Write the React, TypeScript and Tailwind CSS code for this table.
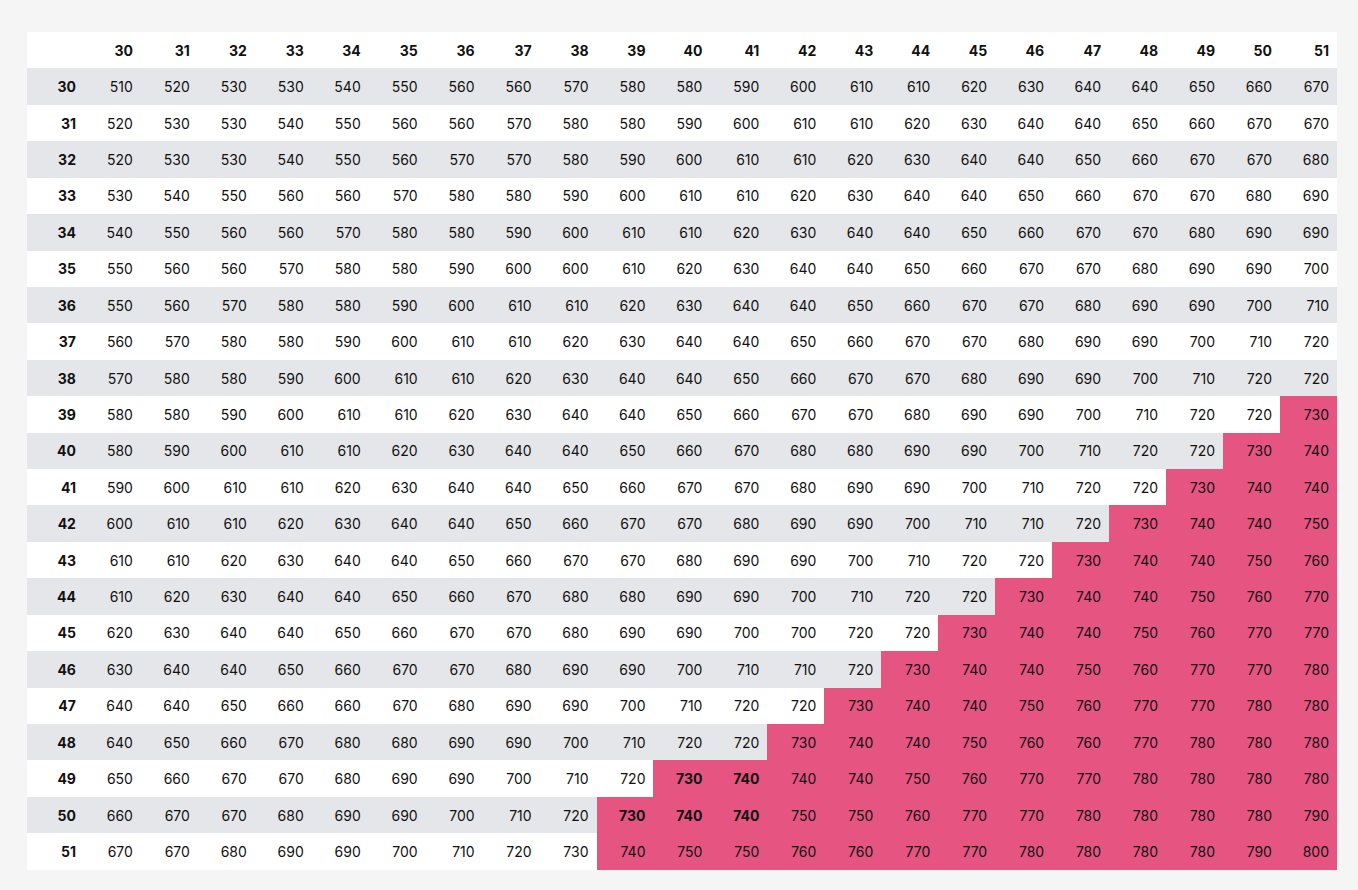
const cols = Array.from({ length: 22 }, (_, i) => 30 + i);

const data: number[][] = [
  [510, 520, 530, 530, 540, 550, 560, 560, 570, 580, 580, 590, 600, 610, 610, 620, 630, 640, 640, 650, 660, 670],
  [520, 530, 530, 540, 550, 560, 560, 570, 580, 580, 590, 600, 610, 610, 620, 630, 640, 640, 650, 660, 670, 670],
  [520, 530, 530, 540, 550, 560, 570, 570, 580, 590, 600, 610, 610, 620, 630, 640, 640, 650, 660, 670, 670, 680],
  [530, 540, 550, 560, 560, 570, 580, 580, 590, 600, 610, 610, 620, 630, 640, 640, 650, 660, 670, 670, 680, 690],
  [540, 550, 560, 560, 570, 580, 580, 590, 600, 610, 610, 620, 630, 640, 640, 650, 660, 670, 670, 680, 690, 690],
  [550, 560, 560, 570, 580, 580, 590, 600, 600, 610, 620, 630, 640, 640, 650, 660, 670, 670, 680, 690, 690, 700],
  [550, 560, 570, 580, 580, 590, 600, 610, 610, 620, 630, 640, 640, 650, 660, 670, 670, 680, 690, 690, 700, 710],
  [560, 570, 580, 580, 590, 600, 610, 610, 620, 630, 640, 640, 650, 660, 670, 670, 680, 690, 690, 700, 710, 720],
  [570, 580, 580, 590, 600, 610, 610, 620, 630, 640, 640, 650, 660, 670, 670, 680, 690, 690, 700, 710, 720, 720],
  [580, 580, 590, 600, 610, 610, 620, 630, 640, 640, 650, 660, 670, 670, 680, 690, 690, 700, 710, 720, 720, 730],
  [580, 590, 600, 610, 610, 620, 630, 640, 640, 650, 660, 670, 680, 680, 690, 690, 700, 710, 720, 720, 730, 740],
  [590, 600, 610, 610, 620, 630, 640, 640, 650, 660, 670, 670, 680, 690, 690, 700, 710, 720, 720, 730, 740, 740],
  [600, 610, 610, 620, 630, 640, 640, 650, 660, 670, 670, 680, 690, 690, 700, 710, 710, 720, 730, 740, 740, 750],
  [610, 610, 620, 630, 640, 640, 650, 660, 670, 670, 680, 690, 690, 700, 710, 720, 720, 730, 740, 740, 750, 760],
  [610, 620, 630, 640, 640, 650, 660, 670, 680, 680, 690, 690, 700, 710, 720, 720, 730, 740, 740, 750, 760, 770],
  [620, 630, 640, 640, 650, 660, 670, 670, 680, 690, 690, 700, 700, 720, 720, 730, 740, 740, 750, 760, 770, 770],
  [630, 640, 640, 650, 660, 670, 670, 680, 690, 690, 700, 710, 710, 720, 730, 740, 740, 750, 760, 770, 770, 780],
  [640, 640, 650, 660, 660, 670, 680, 690, 690, 700, 710, 720, 720, 730, 740, 740, 750, 760, 770, 770, 780, 780],
  [640, 650, 660, 670, 680, 680, 690, 690, 700, 710, 720, 720, 730, 740, 740, 750, 760, 760, 770, 780, 780, 780],
  [650, 660, 670, 670, 680, 690, 690, 700, 710, 720, 730, 740, 740, 740, 750, 760, 770, 770, 780, 780, 780, 780],
  [660, 670, 670, 680, 690, 690, 700, 710, 720, 730, 740, 740, 750, 750, 760, 770, 770, 780, 780, 780, 780, 790],
  [670, 670, 680, 690, 690, 700, 710, 720, 730, 740, 750, 750, 760, 760, 770, 770, 780, 780, 780, 780, 790, 800],
];

// highlighted cells: "row-col"
const bold = new Set(["49-40", "49-41", "50-39", "50-40", "50-41"]);
// 730 but left unshaded in the source chart
const plain = new Set(["51-38"]);

export default function App() {
  return (
    <div className="min-h-screen bg-[#f5f5f5] pt-[32px] pl-[27px] font-['Inter','Liberation_Sans',sans-serif] text-[14px] text-[#111]">
      <table className="w-[1310px] table-fixed border-collapse">
        <thead>
          <tr className="h-[36.43px] bg-white">
            <th className="px-2" />
            {cols.map((c) => (
              <th key={c} className="px-2 text-right font-bold">
                {c}
              </th>
            ))}
          </tr>
        </thead>
        <tbody>
          {data.map((row, r) => {
            const label = 30 + r;
            return (
              <tr key={label} className={`h-[36.43px] ${r % 2 === 0 ? "bg-[#e5e6e9]" : "bg-white"}`}>
                <td className="px-2 text-right font-bold">{label}</td>
                {row.map((v, c) => {
                  const key = `${label}-${30 + c}`;
                  const hot = v >= 730 && !plain.has(key);
                  return (
                    <td
                      key={c}
                      className={`px-2 text-right ${hot ? "bg-[#e65582]" : ""} ${bold.has(key) ? "font-bold" : ""}`}
                    >
                      {v}
                    </td>
                  );
                })}
              </tr>
            );
          })}
        </tbody>
      </table>
    </div>
  );
}
